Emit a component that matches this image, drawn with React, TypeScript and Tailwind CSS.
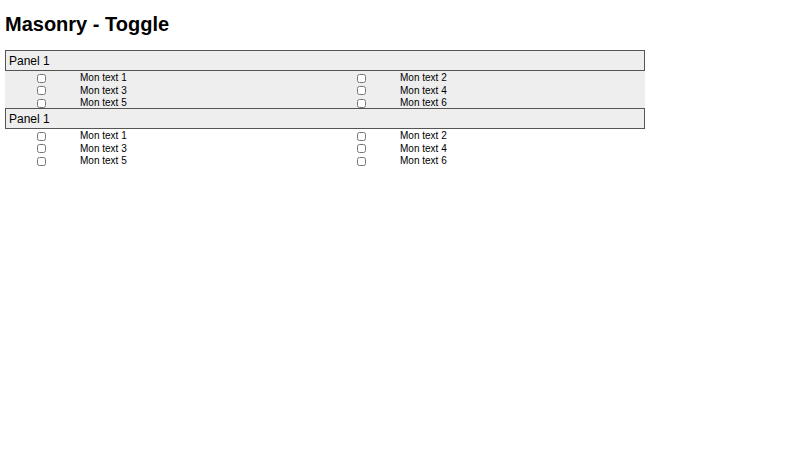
import React from "react";

const items = [
  ["Mon text 1", "Mon text 2"],
  ["Mon text 3", "Mon text 4"],
  ["Mon text 5", "Mon text 6"],
];

function Panel({ shaded }: { shaded: boolean }) {
  return (
    <div className="w-[640px]">
      <div className="h-[21px] border border-[#555] bg-[#eeeeee] pl-[3px] text-[12px] leading-[20px] text-black">
        Panel 1
      </div>
      <div className={`grid h-[37px] grid-cols-2 ${shaded ? "bg-[#eeeeee]" : "bg-white"}`}>
        {[0, 1].map((col) => (
          <div key={col} className="flex flex-col pt-[1px]">
            {items.map((row, i) => (
              <div key={i} className="flex h-[12.5px] shrink-0 items-center text-[10px] text-black">
                <div className="flex w-[72px] justify-center">
                  <input type="checkbox" className="m-0 h-[9px] w-[9px] accent-gray-400" />
                </div>
                <span className="pl-[3px] leading-[12px]">{row[col]}</span>
              </div>
            ))}
          </div>
        ))}
      </div>
    </div>
  );
}

export default function App() {
  return (
    <div className="min-h-[450px] bg-white px-[5px] pt-[12px]" style={{ fontFamily: '"Liberation Sans", Arial, sans-serif' }}>
      <h1 className="mb-[14px] text-[20px] font-bold leading-[24px] text-black">Masonry - Toggle</h1>
      <Panel shaded={true} />
      <Panel shaded={false} />
    </div>
  );
}
